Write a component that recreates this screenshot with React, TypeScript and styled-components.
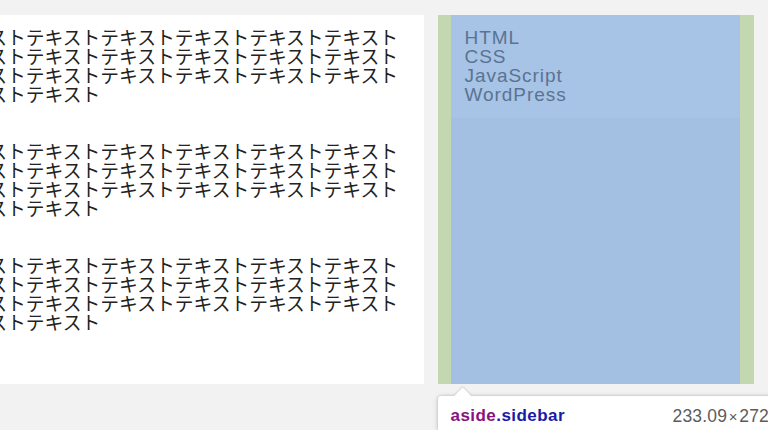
import React from "react";
import styled, { createGlobalStyle } from "styled-components";

const Global = createGlobalStyle`
html, body {
  margin: 0;
  padding: 0;
  height: 100%;
  overflow: hidden;
  background: #f2f2f2;
}
#root {
  height: 100%;
}
`;

const Page = styled.div`
  position: relative;
  display: flex;
  align-items: stretch;
  gap: 14px;
  padding: 15px 14px 0 0;
  height: 369px;
`;

const Main = styled.main`
  flex: 0 0 auto;
  margin-left: -70px;
  padding: 12px 21.6px 14.7px 21.4px;
  background: #fff;
  font-family: "Noto Sans CJK JP", "Noto Sans", sans-serif;
`;

const Para = styled.p`
  width: 451px;
  margin: 0 0 38px;
  font-size: 18.75px;
  line-height: 19px;
  color: #222;
  word-break: break-all;
`;

const Aside = styled.aside`
  flex: 0 0 316px;
  box-sizing: border-box;
  padding: 0 13.5px;
  background: #c3d7b1;
  display: flex;
`;

const Content = styled.div`
  flex: 1;
  display: flex;
  flex-direction: column;
  background: #a3bfe1;
`;

const List = styled.ul`
  list-style: none;
  margin: 0;
  padding: 13px 13px 14px;
  background: #a7c3e5;
  font-family: "Liberation Sans", Arial, sans-serif;
  font-size: 19px;
  line-height: 19px;
  letter-spacing: 0.95px;
  color: #5a7393;
`;

const Tooltip = styled.div`
  position: absolute;
  left: 438px;
  top: 396px;
  width: 360px;
  height: 34px;
  background: #fff;
  border-radius: 3px 3px 0 0;
  box-shadow: 0 0 3px rgba(0, 0, 0, 0.22), 0 1px 6px rgba(0, 0, 0, 0.12);
  display: flex;
  align-items: flex-start;
  padding: 10px 0 0 12.5px;
  box-sizing: border-box;
  font-family: "Liberation Sans", Arial, sans-serif;
  font-size: 17px;
  line-height: 20px;

  &::before {
    content: "";
    position: absolute;
    left: 19px;
    top: -6px;
    width: 11.5px;
    height: 11.5px;
    background: #fff;
    transform: rotate(45deg);
    box-shadow: -1px -1px 2px rgba(0, 0, 0, 0.12);
  }
`;

const Label = styled.div`
  position: relative;
  flex: 0 0 222px;
  font-weight: bold;
  letter-spacing: 0.45px;
`;

const Tag = styled.span<{ c: string }>`
  color: ${({ c }) => c};
`;

const Dims = styled.div`
  position: relative;
  color: #5c5c5c;
  font-size: 17.5px;
  letter-spacing: 0.2px;
  white-space: nowrap;
`;

const Times = styled.span`
  font-size: 15px;
  margin: 0 1.5px;
`;

const skills = ["HTML", "CSS", "JavaScript", "WordPress"];
const text = "テキスト".repeat(20);

const App: React.FC = () => {
  return (
    <>
      <Global />
      <Page>
        <Main>
          <Para>{text}</Para>
          <Para>{text}</Para>
          <Para>{text}</Para>
        </Main>
        <Aside className="sidebar">
          <Content>
            <List>
              {skills.map((s) => (
                <li key={s}>{s}</li>
              ))}
            </List>
          </Content>
        </Aside>
        <Tooltip>
          <Label>
            <Tag c="#881280">aside</Tag>
            <Tag c="#1a1aa6">.sidebar</Tag>
          </Label>
          <Dims>
            233.09<Times>×</Times>272
          </Dims>
        </Tooltip>
      </Page>
    </>
  );
};

export default App;
